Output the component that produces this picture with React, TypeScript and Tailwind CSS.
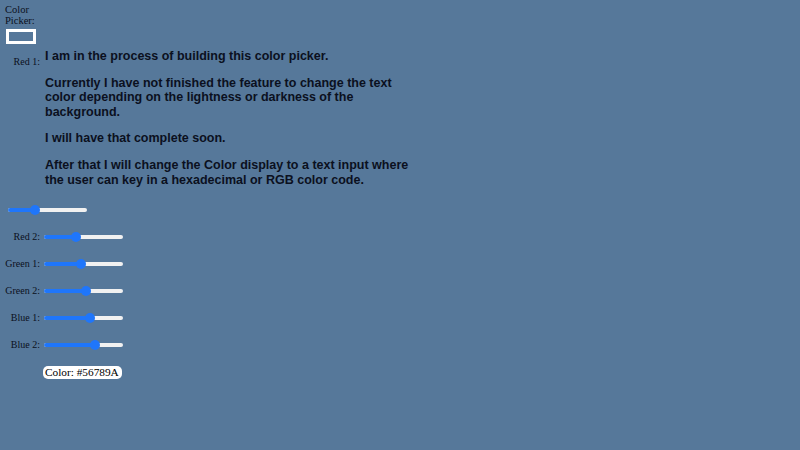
import React from "react";

type SliderProps = { pct: number };

// Range-style slider: blue filled track up to the thumb, white remainder.
function Slider({ pct }: SliderProps) {
  return (
    <div className="relative h-[12px] w-[79px]">
      <div className="absolute left-0 right-0 top-[4px] h-[4px] rounded-full bg-[#f1f1f1]" />
      <div
        className="absolute left-0 top-[4px] h-[4px] rounded-full bg-[#1f76fb]"
        style={{ width: `${pct}%` }}
      />
      <div
        className="absolute top-[1px] h-[10px] w-[10px] -translate-x-1/2 rounded-full bg-[#1f76fb]"
        style={{ left: `${pct}%` }}
      />
    </div>
  );
}

function Row({ label, pct }: { label: string; pct: number }) {
  return (
    <div className="flex h-[12px] items-center">
      <div className="w-[40px] text-right text-[10px] leading-[12px]">{label}</div>
      <div className="ml-[4px]">
        <Slider pct={pct} />
      </div>
    </div>
  );
}

export default function App() {
  return (
    <div
      className="min-h-[450px] w-full bg-[#56789A] text-[#0b1020]"
      style={{ fontFamily: '"Liberation Serif", "Times New Roman", serif' }}
    >
      <div className="pt-[4px]">
        <div className="ml-[5px] w-[36px] text-[10.5px] leading-[11px]">Color Picker:</div>
        <div className="ml-[6px] mt-[3px] h-[15px] w-[30px] border-[3px] border-white" />

        <div className="mt-[5px] flex">
          <div className="mt-[7px] w-[40px] text-right text-[10px] leading-[12px]">Red 1:</div>
          <div
            className="ml-[5px] w-[372px] text-[12.5px] font-bold leading-[14.6px]"
            style={{ fontFamily: '"Liberation Sans", Arial, sans-serif' }}
          >
            <p className="mb-[12px]">I am in the process of building this color picker.</p>
            <p className="mb-[12px]">
              Currently I have not finished the feature to change the text color depending on the
              lightness or darkness of the background.
            </p>
            <p className="mb-[12px]">I will have that complete soon.</p>
            <p>
              After that I will change the Color display to a text input where the user can key in a
              hexadecimal or RGB color code.
            </p>
          </div>
        </div>

        <div className="mt-[17px] flex flex-col gap-[15px]">
          <div className="ml-[8px]">
            <Slider pct={34.5} />
          </div>
          <Row label="Red 2:" pct={41} />
          <Row label="Green 1:" pct={46.5} />
          <Row label="Green 2:" pct={53} />
          <Row label="Blue 1:" pct={58.5} />
          <Row label="Blue 2:" pct={65} />
          <div className="ml-[43px] flex h-[13px] w-[79px] items-center rounded-[5px] bg-white pl-[2px] text-[11.3px] leading-[13px] text-black">
            Color: #56789A
          </div>
        </div>
      </div>
    </div>
  );
}
